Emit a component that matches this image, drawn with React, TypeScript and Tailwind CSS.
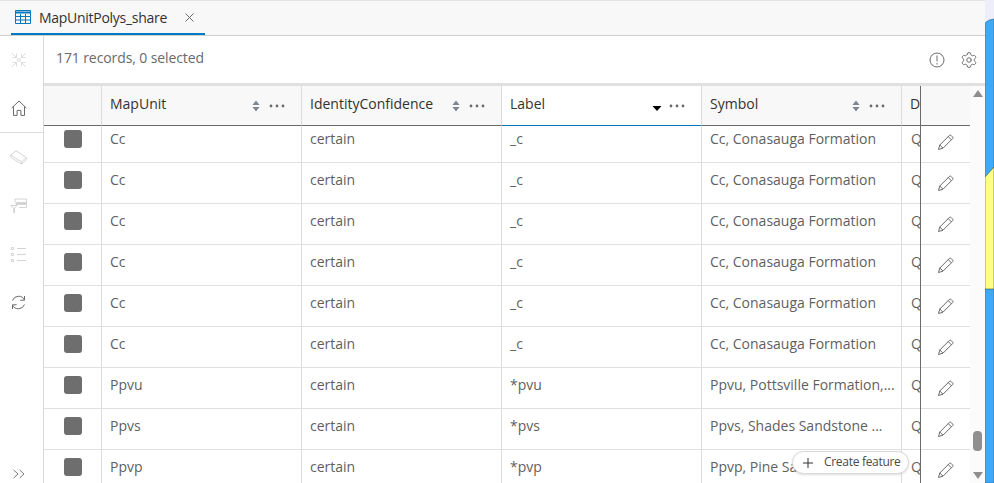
import React from "react";
import { Settings } from "lucide-react";

const rows = [
    { unit: "Cc", label: "_c", symbol: "Cc, Conasauga Formation" },
    { unit: "Cc", label: "_c", symbol: "Cc, Conasauga Formation" },
    { unit: "Cc", label: "_c", symbol: "Cc, Conasauga Formation" },
    { unit: "Cc", label: "_c", symbol: "Cc, Conasauga Formation" },
    { unit: "Cc", label: "_c", symbol: "Cc, Conasauga Formation" },
    { unit: "Cc", label: "_c", symbol: "Cc, Conasauga Formation" },
    { unit: "Ppvu", label: "*pvu", symbol: "Ppvu, Pottsville Formation,..." },
    { unit: "Ppvs", label: "*pvs", symbol: "Ppvs, Shades Sandstone ..." },
    { unit: "Ppvp", label: "*pvp", symbol: "Ppvp, Pine Sa" },
];

function SortIcon() {
    return (
        <svg width="8" height="12" viewBox="0 0 8 12" className="fill-[#7d8794]">
            <path d="M4 0.5 7.5 5H0.5Z" />
            <path d="M4 11.5 7.5 7H0.5Z" />
        </svg>
    );
}

function Dots() {
    return (
        <svg width="16" height="4" viewBox="0 0 16 4" className="fill-[#6a6a6a]">
            <circle cx="2" cy="2" r="1.4" />
            <circle cx="8" cy="2" r="1.4" />
            <circle cx="14" cy="2" r="1.4" />
        </svg>
    );
}

function HeaderCell({ title, active }: { title: string; active?: boolean }) {
    return (
        <div
            className={
                "w-[200px] shrink-0 flex items-center pl-2 pr-4 border-r border-[#dcdcdc] border-b " +
                (active ? "bg-white border-b-[#0079c1]" : "border-b-[#6a6a6a]")
            }
        >
            <span className="flex-1 text-[#323232] -mt-1">{title}</span>
            {active ? (
                <svg width="10" height="5" viewBox="0 0 10 5" className="fill-black mt-1.5 mr-[7px]">
                    <path d="M0.5 0h9L5 5Z" />
                </svg>
            ) : (
                <span className="mr-[9px] mt-px">
                    <SortIcon />
                </span>
            )}
            <Dots />
        </div>
    );
}

function Pencil() {
    return (
        <svg width="17" height="17" viewBox="0 0 17 17" fill="none" stroke="#6a6a6a" strokeWidth="1">
            <path d="M1.5 15.5 2.8 11 12.5 1.3a1 1 0 0 1 1.4 0l1.8 1.8a1 1 0 0 1 0 1.4L6 14.2Z" />
            <path d="M2.8 11 6 14.2M11.2 2.6l3.2 3.2" />
        </svg>
    );
}

function Sidebar() {
    return (
        <div className="w-[44px] shrink-0 flex flex-col border-r border-[#d8d8d8]">
            <div className="h-12 flex items-center justify-center pr-[6px]">
                <svg width="16" height="16" viewBox="0 0 16 16" fill="none" stroke="#dcdcdc" strokeWidth="1">
                    <circle cx="8" cy="8" r="1.5" />
                    <path d="M1 1 5 5M5.5 1.5v4h-4M15 1l-4 4M10.5 1.5v4h4M1 15l4-4M5.5 14.5v-4h-4M15 15l-4-4M10.5 14.5v-4h4" />
                </svg>
            </div>
            <div className="h-12 flex items-center justify-center pr-[6px] border-b border-[#dedede] box-content">
                <svg width="16" height="16" viewBox="0 0 16 16" fill="none" stroke="#6a6a6a" strokeWidth="1">
                    <path d="M0.7 8 8 1l7.3 7M2.5 6.5v8.9h3.6v-5h3.8v5h3.6V6.5" />
                </svg>
            </div>
            <div className="h-12 flex items-center justify-center pr-[6px]">
                <svg width="17" height="15" viewBox="0 0 17 15" fill="none" stroke="#d4d4d4" strokeWidth="1">
                    <path d="M0.7 5 6 0.7 16.3 7.5v2.3L11.5 14 0.7 7.3ZM0.7 5 11.5 11.8 16.3 7.5M11.5 11.8V14" />
                </svg>
            </div>
            <div className="h-12 flex items-center justify-center pr-[6px]">
                <svg width="17" height="15" viewBox="0 0 17 15" fill="none" stroke="#d4d4d4" strokeWidth="1">
                    <path d="M0.5 7.5h6.5L4.6 10v4.5h-1V10ZM5 4.5V1h11.5v8.5H9" />
                    <path d="M6 4.5h10.5v2H6Z" fill="#d4d4d4" />
                </svg>
            </div>
            <div className="h-12 flex items-center justify-center pr-[6px] mt-px">
                <svg width="16" height="15" viewBox="0 0 16 15" fill="none" stroke="#d4d4d4" strokeWidth="1">
                    <path d="M0.5 0.5h2v2h-2ZM0.5 6.5h2v2h-2ZM0.5 12.5h2v2h-2ZM6 1.5h9M6 7.5h9M6 13.5h9" />
                </svg>
            </div>
            <div className="h-12 flex items-center justify-center pr-[6px]">
                <svg width="17" height="17" viewBox="0 0 17 17" fill="none" stroke="#6a6a6a" strokeWidth="1">
                    <path d="M2.5 6.5A6.5 6.5 0 0 1 14.5 6M14.5 2v4.2h-4.2M14.5 10.5A6.5 6.5 0 0 1 2.5 11M2.5 15v-4.2h4.2" />
                </svg>
            </div>
            <div className="mt-auto h-[14px] flex items-start justify-center pr-[6px]">
                <svg width="12" height="10" viewBox="0 0 12 10" fill="none" stroke="#7a7a7a" strokeWidth="1">
                    <path d="M0.7 1 5 5 0.7 9M6.7 1 11 5 6.7 9" />
                </svg>
            </div>
        </div>
    );
}

function Table() {
    return (
        <div className="flex flex-1 min-h-0 relative">
            <div className="w-[876px] shrink-0 overflow-hidden">
                <div className="flex h-[40px] bg-[#f8f8f8] w-[1100px] relative z-10">
                    <div className="w-[58px] shrink-0 border-r border-[#dcdcdc] border-b border-b-[#6a6a6a]" />
                    <HeaderCell title="MapUnit" />
                    <HeaderCell title="IdentityConfidence" />
                    <HeaderCell title="Label" active />
                    <HeaderCell title="Symbol" />
                    <div className="w-[200px] shrink-0 flex items-center pl-2 border-b border-b-[#6a6a6a] text-[#323232]">
                        <span className="-mt-1">Description</span>
                    </div>
                </div>
                <div className="-mt-1">
                    {rows.map((row, i) => (
                        <div key={i} className="flex h-[41px] w-[1100px] border-b border-[#e0e0e0] text-[#5f5f5f]">
                            <div className="w-[58px] shrink-0 border-r border-[#dcdcdc] pl-5 pt-2">
                                <div className="w-[18px] h-[18px] rounded-[3px] bg-[#6e6e6e]" />
                            </div>
                            <div className="w-[200px] shrink-0 border-r border-[#dcdcdc] pl-2 pt-1.5">{row.unit}</div>
                            <div className="w-[200px] shrink-0 border-r border-[#dcdcdc] pl-2 pt-1.5">certain</div>
                            <div className="w-[200px] shrink-0 border-r border-[#dcdcdc] pl-2 pt-1.5">{row.label}</div>
                            <div className="w-[200px] shrink-0 border-r border-[#dcdcdc] pl-2 pt-1.5 whitespace-nowrap">{row.symbol}</div>
                            <div className="w-[200px] shrink-0 pl-[9px] pt-1.5">Q</div>
                        </div>
                    ))}
                </div>
            </div>

            <div className="w-[50px] shrink-0 border-l border-[#6a6a6a] overflow-hidden bg-white">
                <div className="h-[40px] bg-[#f8f8f8] border-b border-[#6a6a6a] relative z-10" />
                <div className="-mt-1">
                    {rows.map((row, i) => (
                        <div key={i} className="h-[41px] border-b border-[#e0e0e0] flex items-start justify-center pt-3">
                            <Pencil />
                        </div>
                    ))}
                </div>
            </div>

            <div className="w-[15px] shrink-0 bg-[#fbfbfb] flex flex-col items-center pt-1">
                <svg width="10" height="7" viewBox="0 0 10 7" className="fill-[#8f8f8f]">
                    <path d="M5 0 10 7H0Z" />
                </svg>
                <div className="mt-auto w-[9px] h-[20px] rounded-[4px] bg-[#8f8f8f]" />
                <svg width="10" height="7" viewBox="0 0 10 7" className="fill-[#8f8f8f] mt-[21px] mb-1">
                    <path d="M0 0H10L5 7Z" />
                </svg>
            </div>

            <div className="absolute left-[748px] top-[365px] w-[117px] h-[23px] rounded-full bg-white border border-[#d8d8d8] shadow-sm flex items-center pl-[10px] z-20">
                <svg width="10" height="10" viewBox="0 0 10 10" stroke="#323232" strokeWidth="1">
                    <path d="M5 0v10M0 5h10" />
                </svg>
                <span className="ml-[11px] -mt-px text-[12px] tracking-[-0.3px] text-[#4a4a4a]">Create feature</span>
            </div>
        </div>
    );
}

export default function App() {
    return (
        <div className="h-screen flex overflow-hidden bg-white text-[14px] font-['Open_Sans',sans-serif]">
            <div className="w-[985px] shrink-0 flex flex-col">
                <div className="h-9 shrink-0 bg-[#f8f8f8] border-t border-[#e4e4e4] border-b border-b-[#cfcfcf] pl-[11px]">
                    <div className="w-[194px] h-[34px] border-b-2 border-[#0079c1] flex items-center pl-1">
                        <svg width="16" height="14" viewBox="0 0 16 14" fill="none" stroke="#0079c1" strokeWidth="1">
                            <path d="M0.5 0.5h15v13H0.5Z" />
                            <path d="M0.5 2.5h15" strokeWidth="2" />
                            <path d="M0.5 6.5h15M0.5 10h15M5.5 4v9.5M10.5 4v9.5" />
                        </svg>
                        <span className="ml-2 text-[#323232] tracking-[-0.28px]">MapUnitPolys_share</span>
                        <svg width="9" height="9" viewBox="0 0 9 9" stroke="#6a6a6a" strokeWidth="1" className="ml-[18px]">
                            <path d="M0.5 0.5l8 8M8.5 0.5l-8 8" />
                        </svg>
                    </div>
                </div>
                <div className="flex flex-1 min-h-0">
                    <Sidebar />
                    <div className="flex-1 flex flex-col min-w-0">
                        <div className="h-[50px] shrink-0 border-b-[3px] border-[#e0e0e0] flex items-center pl-3 pr-2">
                            <span className="flex-1 text-[#6a6a6a] tracking-[-0.1px] -mt-1">171 records, 0 selected</span>
                            <svg width="16" height="16" viewBox="0 0 16 16" fill="none" stroke="#6a6a6a" strokeWidth="1">
                                <circle cx="8" cy="8" r="7" />
                                <path d="M8 3.5v6M8 11v1.5" />
                            </svg>
                            <Settings size={18} strokeWidth={1.3} color="#6a6a6a" className="ml-[15px] -mr-px" />
                        </div>
                        <Table />
                    </div>
                </div>
            </div>
            <svg width="9" height="483" viewBox="0 0 9 483" className="shrink-0">
                <rect width="9" height="483" fill="#eeeefa" />
                <path d="M0 23Q4 19 9 19V483H0Z" fill="#3fa9f5" stroke="#2f5f8a" strokeWidth="0.5" />
                <path d="M0 177 9 167V289H0Z" fill="#ffff80" stroke="#333333" strokeWidth="0.5" />
            </svg>
        </div>
    );
}
